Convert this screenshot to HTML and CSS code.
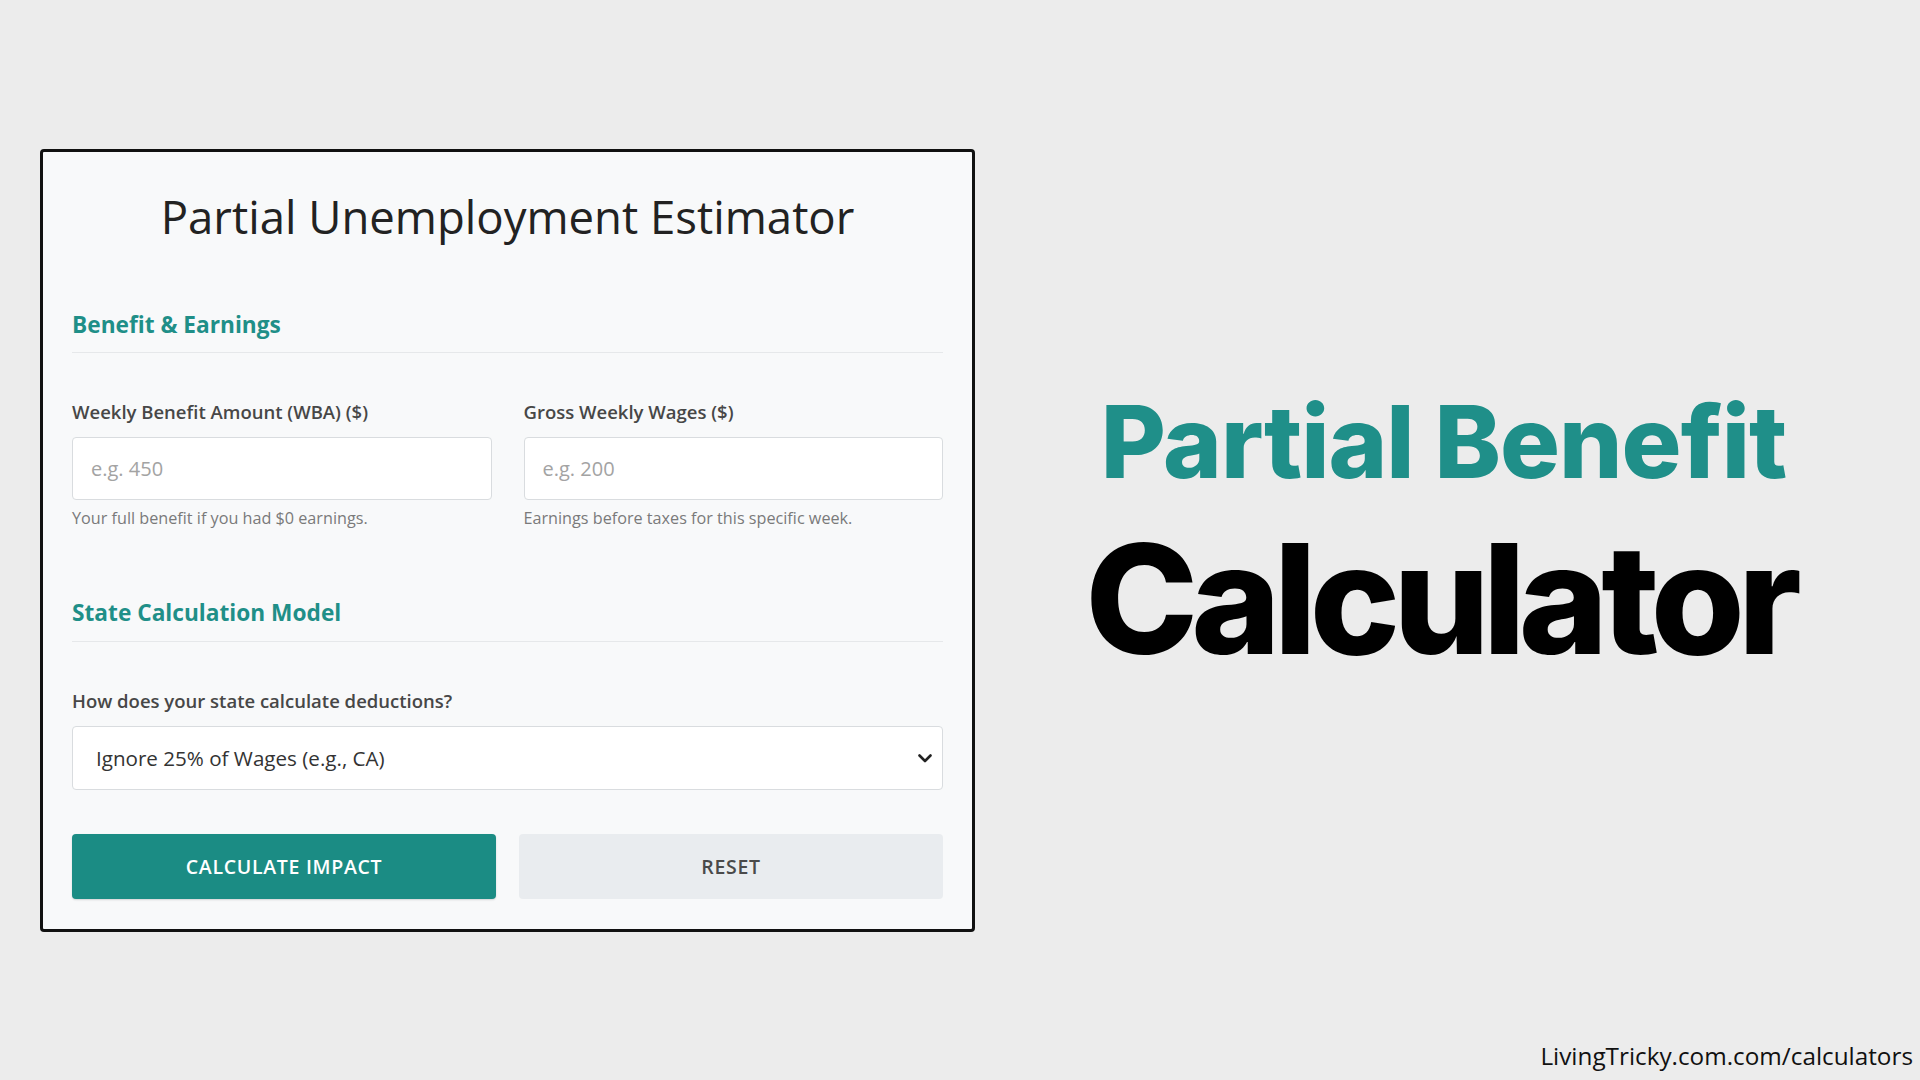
FILE: index.html
```html
<!DOCTYPE html>
<html lang="en">
<head>
<meta charset="utf-8">
<title>Partial Benefit Calculator</title>
<link rel="stylesheet" href="styles.css">
</head>
<body>
<main class="page">
  <section class="card">
    <h1 class="card-title">Partial Unemployment Estimator</h1>

    <h2 class="section-title">Benefit &amp; Earnings</h2>
    <div class="field-row">
      <div class="field">
        <label class="field-label" for="wba">Weekly Benefit Amount (WBA) ($)</label>
        <input class="text-input" id="wba" type="text" placeholder="e.g. 450">
        <p class="help">Your full benefit if you had $0 earnings.</p>
      </div>
      <div class="field">
        <label class="field-label" for="wages">Gross Weekly Wages ($)</label>
        <input class="text-input" id="wages" type="text" placeholder="e.g. 200">
        <p class="help">Earnings before taxes for this specific week.</p>
      </div>
    </div>

    <h2 class="section-title second">State Calculation Model</h2>
    <div class="field">
      <label class="field-label" for="model">How does your state calculate deductions?</label>
      <div class="select-wrap">
        <select class="select" id="model">
          <option>Ignore 25% of Wages (e.g., CA)</option>
        </select>
        <svg class="chevron" viewBox="0 0 14 9" width="14" height="9" aria-hidden="true"><path d="M1.5 1.5 L7 7 L12.5 1.5" fill="none" stroke="#222" stroke-width="2.6" stroke-linecap="round" stroke-linejoin="round"/></svg>
      </div>
    </div>

    <div class="actions">
      <button class="btn btn-primary" type="button">Calculate Impact</button>
      <button class="btn btn-secondary" type="button">Reset</button>
    </div>
  </section>

  <section class="hero">
    <div class="hero-line1">Partial Benefit</div>
    <div class="hero-line2">Calculator</div>
  </section>
</main>
<div class="footer-link">LivingTricky.com.com/calculators</div>
</body>
</html>
```

FILE: styles.css
```css
* { box-sizing: border-box; }

html, body {
  margin: 0;
  padding: 0;
}

body {
  width: 1920px;
  height: 1080px;
  background: #ececec;
  font-family: "Open Sans", "Noto Sans", sans-serif;
  position: relative;
  overflow: hidden;
}

.page {
  height: 1080px;
  display: flex;
  align-items: center;
  padding-left: 40px;
}

.card {
  width: 935px;
  flex: 0 0 935px;
  background: #f8f9fa;
  border: 3px solid #111;
  border-radius: 4px;
  padding: 30px 29px 30px 29px;
}

.card-title {
  margin: 0;
  text-align: center;
  font-size: 45.5px;
  line-height: 68px;
  font-weight: 500;
  color: #222;
}

.section-title {
  margin: 60px 0 0 0;
  padding-bottom: 12px;
  border-bottom: 1px solid #e6e8ea;
  font-size: 22.7px;
  line-height: 30px;
  font-weight: 700;
  color: #1f8f88;
}

.section-title.second {
  margin-top: 70px;
  padding-bottom: 13px;
}

.field-row {
  display: grid;
  grid-template-columns: 1fr 1fr;
  column-gap: 32px;
}

.field {
  display: flex;
  flex-direction: column;
  padding-top: 47px;
}

.field-label {
  font-size: 18.5px;
  line-height: 24px;
  font-weight: 600;
  color: #474747;
  margin-bottom: 13px;
}

.text-input {
  height: 63px;
  width: 100%;
  border: 1px solid #d9dcdf;
  border-radius: 4px;
  background: #fff;
  padding: 0 18px;
  font-family: inherit;
  font-size: 20px;
  color: #333;
  outline: none;
}

.text-input::placeholder {
  color: #a3a3a3;
}

.help {
  margin: 8px 0 0 0;
  font-size: 16.2px;
  line-height: 20px;
  color: #7a7a7a;
}

.select-wrap {
  position: relative;
}

.select {
  -webkit-appearance: none;
  appearance: none;
  width: 100%;
  height: 64px;
  border: 1px solid #d9dcdf;
  border-radius: 4px;
  background: #fff;
  padding: 0 40px 0 23px;
  font-family: inherit;
  font-size: 20.6px;
  color: #333;
  outline: none;
}

.chevron {
  position: absolute;
  right: 11px;
  top: 28px;
  pointer-events: none;
}

.actions {
  display: grid;
  grid-template-columns: 424px 424px;
  justify-content: space-between;
  margin-top: 44px;
}

.btn {
  height: 65px;
  border: none;
  border-radius: 4px;
  font-family: inherit;
  font-size: 19.5px;
  font-weight: 600;
  letter-spacing: 0.7px;
  text-transform: uppercase;
  cursor: pointer;
}

.btn-primary {
  background: #1b8c84;
  color: #fff;
  box-shadow: 0 1px 2px rgba(0,0,0,0.15);
}

.btn-secondary {
  background: #e9ecef;
  color: #4a4a4a;
}

.hero {
  flex: 1;
  display: flex;
  flex-direction: column;
  align-items: center;
  margin-top: -15px;
  padding-right: 8px;
  font-family: "Inter", "Lato", sans-serif;
  font-weight: 800;
}

.hero-line1 {
  font-size: 100px;
  line-height: 130px;
  color: #1f8f89;
  letter-spacing: -1px;
}

.hero-line2 {
  font-size: 152px;
  line-height: 180px;
  color: #000;
  letter-spacing: -7px;
  margin-top: 2px;
  margin-left: -7px;
}

.footer-link {
  position: absolute;
  right: 7px;
  bottom: 8px;
  font-size: 24.3px;
  line-height: 32px;
  color: #111;
}
```
